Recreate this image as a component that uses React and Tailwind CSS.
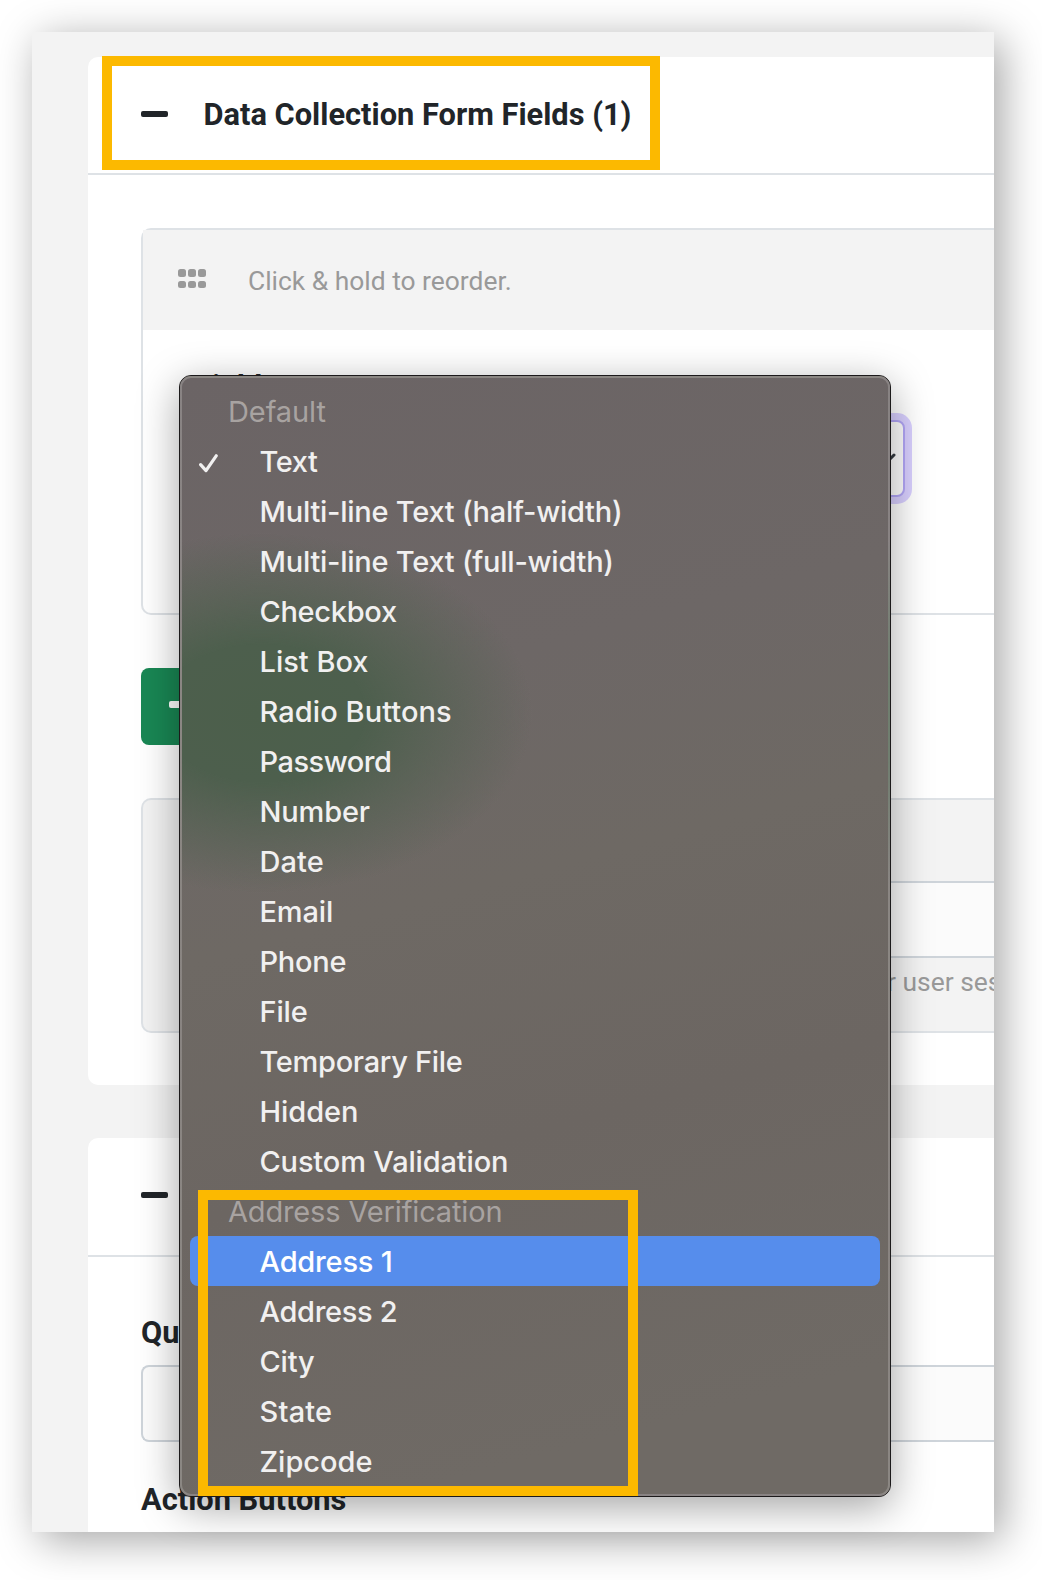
const groups = [
  {
    label: "Default",
    ls: "tracking-[-0.1px]",
    items: [
      ["Text", "tracking-[-0.4px]"],
      ["Multi-line Text (half-width)", "tracking-[-0.25px]"],
      ["Multi-line Text (full-width)", "tracking-[-0.25px]"],
      ["Checkbox", "tracking-[-0.3px]"],
      ["List Box", "tracking-[0px]"],
      ["Radio Buttons", "tracking-[0.07px]"],
      ["Password", "tracking-[-0.5px]"],
      ["Number", "tracking-[-0.15px]"],
      ["Date", "tracking-[0.1px]"],
      ["Email", "tracking-[-0.15px]"],
      ["Phone", "tracking-[-0.25px]"],
      ["File", "tracking-[-0.15px]"],
      ["Temporary File", "tracking-[-0.31px]"],
      ["Hidden", "tracking-[-0.05px]"],
      ["Custom Validation", "tracking-[-0.16px]"],
    ],
  },
  {
    label: "Address Verification",
    ls: "tracking-[-0.15px]",
    items: [
      ["Address 1", "tracking-[-0.2px]"],
      ["Address 2", "tracking-[-0.33px]"],
      ["City", "tracking-[-0.2px]"],
      ["State", "tracking-[0.2px]"],
      ["Zipcode", "tracking-[0px]"],
    ],
  },
];

function Minus() {
  return <span className="block h-[6px] w-[27px] shrink-0 rounded-[2px] bg-[#212529]" />;
}

function GripIcon() {
  return (
    <span className="mb-[3px] grid grid-cols-3 gap-x-[2px] gap-y-[4px]">
      {[0, 1, 2, 3, 4, 5].map((i) => (
        <span key={i} className="h-[7.5px] w-[8px] rounded-[2.5px] bg-[#999]" />
      ))}
    </span>
  );
}

function Menu() {
  return (
    <div className="absolute left-[147px] top-[343px] h-[1122px] w-[712px] rounded-[12px] border border-[#1c1a1b] bg-[#6e6964] shadow-[0_10px_40px_rgba(0,0,0,0.36)]">
      <div className="h-full w-full rounded-[11px] border-2 border-white/20 bg-[radial-gradient(270px_180px_at_80px_335px,#4c5f4b_0%,#4d5f4d_38%,rgba(84,97,82,0.7)_65%,rgba(109,103,100,0)_100%),linear-gradient(165deg,#6b6465_0%,#6d6766_28%,#6e6964_45%,#6c6662_65%,#6f6a65_90%)] px-[8px] pt-[9px] font-['Inter',sans-serif] text-[29px] font-[450] leading-[50px] text-[#f1f0f0]">
        {groups.map((g) => (
          <div key={g.label}>
            <div className={`h-[50px] whitespace-nowrap pl-[38px] font-[400] text-[#a8a3a1] ${g.ls}`}>{g.label}</div>
            {g.items.map(([name, ls]) => (
              <div
                key={name}
                className={`-mt-px mb-px flex h-[50px] items-center whitespace-nowrap rounded-[8px] ${name === "Address 1" ? "bg-[#568dec] text-white" : ""}`}
              >
                <span className="w-[69.5px] shrink-0 pl-[9px]">
                  {name === "Text" && (
                    <svg className="mt-[4px]" width="19" height="19" viewBox="0 0 19 19" fill="none" stroke="#f1f0f0" strokeWidth="3.2" strokeLinecap="round" strokeLinejoin="round">
                      <path d="M1.6 10.6 L7 16.6 L17.2 1.8" />
                    </svg>
                  )}
                </span>
                <span className={`pt-px ${ls}`}>{name}</span>
              </div>
            ))}
          </div>
        ))}
      </div>
    </div>
  );
}

export default function App() {
  return (
    <div className="h-[1580px] w-[1042px] overflow-hidden bg-white p-8 font-['Roboto',sans-serif] text-[#212529]">
      <div className="relative h-[1500px] w-[962px] shadow-[8px_8px_40px_rgba(0,0,0,0.36)]">
        <div className="h-full w-full overflow-hidden bg-[#f3f3f3] pl-[56px] pt-[25px]">
          <section className="h-[1028px] rounded-l-[10px] bg-white">
            <header className="flex h-[118px] items-center gap-[35.5px] border-b-2 border-[#dee2e6] pb-[3px] pl-[53px]">
              <Minus />
              <h2 className="whitespace-nowrap pt-[3px] text-[30.8px] font-bold">Data Collection Form Fields (1)</h2>
            </header>
            <div className="pl-[53px] pt-[53px]">
              <div className="h-[387px] rounded-l-[10px] border-2 border-r-0 border-[#dee2e6]">
                <div className="flex h-[100px] items-center gap-[42px] bg-[#f3f3f3] pl-[35px] text-[26.4px] text-[#999]">
                  <GripIcon />
                  <span className="whitespace-nowrap pt-[3px]">Click &amp; hold to reorder.</span>
                </div>
                <div className="w-[762px] pl-[52px] pt-[39px]">
                  <div className="h-[51px] whitespace-nowrap text-[30.8px] font-bold leading-[36px]">Field Type</div>
                  <div className="flex h-[77px] items-center justify-end rounded-[8px] border-2 border-[#b3a7f8] bg-white pr-[7px] shadow-[0_0_0_7px_#d9d0ff]">
                    <svg className="mt-[3px]" width="22" height="14" viewBox="0 0 22 14" fill="none" stroke="#343a40" strokeWidth="3" strokeLinecap="round" strokeLinejoin="round">
                      <path d="M2 2 L11 11 L20 2" />
                    </svg>
                  </div>
                </div>
              </div>
              <div className="mt-[53px] flex h-[77px] w-[240px] items-center rounded-[8px] bg-[#198754] pl-[28px]">
                <span className="mb-[4px] h-[6.5px] w-[26px] rounded-[2px] bg-white" />
              </div>
              <div className="mt-[53px] h-[235px] rounded-l-[10px] border-2 border-r-0 border-[#dee2e6] bg-[#f3f3f3] pl-[52px] pt-[81px]">
                <div className="h-[77px] rounded-l-[8px] border-2 border-r-0 border-[#ced4da] bg-[#fbfbfb]" />
                <p className="ml-[692px] mt-[8px] whitespace-nowrap text-[26.4px] leading-[32px] text-[#999]">r user session</p>
              </div>
            </div>
          </section>
          <section className="mt-[53px] h-[500px] rounded-l-[10px] bg-white">
            <header className="flex h-[119px] items-center border-b-2 border-[#dee2e6] pb-[4px] pl-[53px]">
              <Minus />
            </header>
            <div className="pl-[53px] pt-[58px]">
              <div className="h-[50px] text-[30.8px] font-bold leading-[35px]">Questions</div>
              <div className="h-[77px] rounded-l-[8px] border-2 border-r-0 border-[#ced4da] bg-[#fbfbfb]" />
              <div className="pt-[40px] text-[30.8px] font-bold leading-[35px]">Action Buttons</div>
            </div>
          </section>
        </div>
        <Menu />
        <div className="absolute left-[70px] top-[24px] h-[114px] w-[558px] border-[10px] border-[#fcb900]" />
        <div className="absolute left-[166px] top-[1158px] h-[306px] w-[440px] border-[10px] border-[#fcb900]" />
      </div>
    </div>
  );
}
